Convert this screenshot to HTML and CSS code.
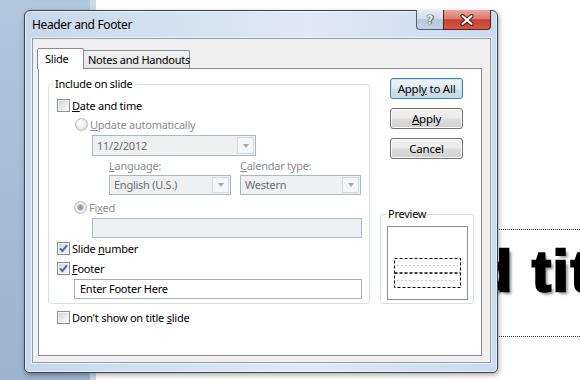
FILE: index.html
```html
<!DOCTYPE html>
<html lang="en">
<head>
<meta charset="utf-8">
<title>Header and Footer</title>
<link rel="stylesheet" href="styles.css">
</head>
<body>
<div class="screen">
  <div class="slides-pane"></div>
  <div class="slide-area">
    <div class="title-ph"><span class="title-text">Click to add title</span></div>
  </div>

  <div class="dialog">
    <div class="titlebar">
      <span class="title">Header and Footer</span>
      <div class="caption-btns">
        <span class="cap-btn help">?</span>
        <span class="cap-btn close">
          <svg width="14" height="12" viewBox="0 0 14 12">
            <path d="M2.5 2 L11.5 10 M11.5 2 L2.5 10" stroke="#4a1a16" stroke-width="4.2" stroke-linecap="round" fill="none"/>
            <path d="M2.5 2 L11.5 10 M11.5 2 L2.5 10" stroke="#ffffff" stroke-width="2.2" stroke-linecap="round" fill="none"/>
          </svg>
        </span>
      </div>
    </div>

    <div class="client">
      <div class="tabs">
        <span class="tab active">Slide</span>
        <span class="tab notes">Notes and Handouts</span>
      </div>
      <div class="panel">
        <div class="main">
          <fieldset class="group include">
            <legend>Include on slide</legend>
            <div class="row r-date"><span class="chk"></span><span class="lbl"><u>D</u>ate and time</span></div>
            <div class="row r-update disabled"><span class="radio"></span><span class="lbl"><u>U</u>pdate automatically</span></div>
            <div class="combo date-combo"><span class="combo-text">11/2/2012</span><span class="combo-btn"><span class="arrow"></span></span></div>
            <div class="lang-row">
              <div class="field lang">
                <span class="flabel"><u>L</u>anguage:</span>
                <div class="combo"><span class="combo-text">English (U.S.)</span><span class="combo-btn"><span class="arrow"></span></span></div>
              </div>
              <div class="field cal">
                <span class="flabel"><u>C</u>alendar type:</span>
                <div class="combo"><span class="combo-text">Western</span><span class="combo-btn"><span class="arrow"></span></span></div>
              </div>
            </div>
            <div class="row r-fixed disabled"><span class="radio on"></span><span class="lbl">Fi<u>x</u>ed</span></div>
            <div class="textbox fixed-box"></div>
            <div class="row r-slide"><span class="chk"><svg width="11" height="11" viewBox="0 0 11 11"><path d="M2 5.3 L4.4 8 L9 2.4" stroke="#4d67a6" stroke-width="2" fill="none"/></svg></span><span class="lbl">Slide <u>n</u>umber</span></div>
            <div class="row r-footer"><span class="chk"><svg width="11" height="11" viewBox="0 0 11 11"><path d="M2 5.3 L4.4 8 L9 2.4" stroke="#4d67a6" stroke-width="2" fill="none"/></svg></span><span class="lbl"><u>F</u>ooter</span></div>
            <div class="textbox footer-box">Enter Footer Here</div>
          </fieldset>

          <div class="side">
            <button class="btn default">Appl<u>y</u> to All</button>
            <button class="btn"><u>A</u>pply</button>
            <button class="btn">Cancel</button>
            <fieldset class="group preview">
              <legend>Preview</legend>
              <div class="preview-box">
                <svg width="79" height="72" viewBox="0 0 79 72">
                  <line x1="9" y1="38.5" x2="70" y2="38.5" stroke="#c8c8c8" stroke-width="1" stroke-dasharray="2 2"/>
                  <line x1="9" y1="53.5" x2="70" y2="53.5" stroke="#c8c8c8" stroke-width="1" stroke-dasharray="2 2"/>
                  <rect x="6.5" y="31.5" width="66" height="29" fill="none" stroke="#000" stroke-width="1" stroke-dasharray="3 2"/>
                  <line x1="6.5" y1="46" x2="72.5" y2="46" stroke="#000" stroke-width="1.6" stroke-dasharray="3 2"/>
                </svg>
              </div>
            </fieldset>
          </div>
        </div>
        <div class="row dont-show"><span class="chk"></span><span class="lbl">Don't show on title <u>s</u>lide</span></div>
      </div>
    </div>
  </div>
</div>
</body>
</html>
```

FILE: styles.css
```css
* { box-sizing: border-box; }

body {
  margin: 0;
  font-family: "Noto Sans", "Open Sans", sans-serif;
  font-size: 11px;
  letter-spacing: -0.25px;
  color: #000;
}

u { text-decoration: underline; text-underline-offset: 1px; }

.screen {
  position: relative;
  width: 580px;
  height: 380px;
  overflow: hidden;
  display: flex;
  background: #fff;
}

/* PowerPoint background */
.slides-pane {
  width: 96px;
  flex: none;
  background: linear-gradient(#b2c6dc, #9db3cd);
  border-right: 6px solid #cad8e8;
}

.slide-area {
  flex: 1;
  position: relative;
  background: #fff;
}

.title-ph {
  position: absolute;
  top: 229px;
  left: 60px;
  width: 600px;
  height: 108px;
  border-top: 1px dotted #333;
  border-bottom: 1px dotted #333;
  padding: 9px 0 0 11px;
}

.title-text {
  font-family: "Liberation Sans", Arial, sans-serif;
  font-weight: bold;
  font-size: 57px;
  line-height: 64px;
  letter-spacing: 2px;
  white-space: nowrap;
  color: #000;
  -webkit-text-stroke: 2.5px #000;
  text-shadow: 3px 3px 3px rgba(0, 0, 0, 0.45);
}

/* Dialog window */
.dialog {
  position: absolute;
  left: 24px;
  top: 10px;
  width: 474px;
  height: 363px;
  display: flex;
  flex-direction: column;
  padding: 0 6px 9px 7px;
  border: 1px solid #34455a;
  border-radius: 6px 6px 5px 5px;
  background: linear-gradient(90deg, #c8d8eb 0%, #d9e5f2 45%, #e0e9f5 60%, #cadaec 100%);
  box-shadow: 1px 2px 5px rgba(0, 0, 0, 0.35), inset 0 0 0 1px rgba(255, 255, 255, 0.55);
}

.titlebar {
  height: 27px;
  flex: none;
  display: flex;
  align-items: center;
}

.title {
  font-size: 12px;
  letter-spacing: -0.35px;
}

.caption-btns {
  margin-left: auto;
  align-self: flex-start;
  margin-top: -1px;
  display: flex;
  height: 20px;
}

.cap-btn {
  display: flex;
  align-items: center;
  justify-content: center;
  height: 20px;
  border: 1px solid #4d5d72;
  border-top: none;
}

.help {
  width: 27px;
  border-radius: 0 0 0 4px;
  border-right: none;
  background: linear-gradient(#e6edf5 0%, #d2dde9 45%, #b7c8db 50%, #c3d2e3 100%);
  color: #f4f6f8;
  font-family: "DejaVu Sans", sans-serif;
  font-weight: bold;
  font-size: 12px;
  letter-spacing: 0;
  text-shadow: 0 0 1px #2f3d4f, 0 0 1px #2f3d4f, 1px 0 1px #2f3d4f;
}

.close {
  width: 48px;
  border-radius: 0 0 4px 0;
  border-color: #5a1f1a;
  background: linear-gradient(#eaa89e 0%, #dc7b6f 45%, #c7402f 52%, #d3584a 100%);
}

.close svg { display: block; }

/* Client area */
.client {
  flex: 1;
  display: flex;
  flex-direction: column;
  background: #f0f0f0;
  border: 1px solid #8b9bb0;
  padding: 9px 8px 6px 5px;
  box-shadow: 0 0 0 1px rgba(255, 255, 255, 0.6);
}

.tabs {
  display: flex;
  align-items: flex-end;
  flex: none;
}

.tab {
  display: flex;
  align-items: center;
  height: 18px;
  border: 1px solid #898c95;
  border-bottom: none;
  background: linear-gradient(#f2f2f2, #e3e3e3);
  padding: 0 4px;
  white-space: nowrap;
}

.tab.active {
  position: relative;
  z-index: 1;
  height: 21px;
  width: 47px;
  margin-left: -1px;
  margin-bottom: -1px;
  background: #fff;
  padding: 0 0 1px 7px;
  border-radius: 2px 2px 0 0;
}

.tab.notes {
  width: 107px;
  margin-left: -1px;
  padding: 0 0 0 4px;
  border-radius: 2px 2px 0 0;
}

.panel {
  flex: 1;
  background: #fff;
  border: 1px solid #898c95;
  padding: 7px 0 0 9px;
  display: flex;
  flex-direction: column;
}

.main {
  display: flex;
  align-items: stretch;
}

.group {
  margin: 0;
  border: 1px solid #d5dfe5;
  border-radius: 3px;
  min-width: 0;
}

.group legend {
  padding: 0 2px;
  line-height: 16px;
  height: 16px;
}

.include {
  width: 322px;
  padding: 4px 8px 4px 8px;
}

.include legend { margin-left: -4px; }

.row {
  display: flex;
  align-items: center;
  height: 18px;
  gap: 2px;
  white-space: nowrap;
}

.disabled .lbl { color: #8d8d8d; }

.r-update { margin-top: 1px; padding-left: 18px; }
.r-fixed { margin-top: 3px; padding-left: 17px; }
.r-slide { margin-top: 1px; }
.r-footer { margin-top: 2px; }

/* Checkbox */
.chk {
  width: 13px;
  height: 13px;
  flex: none;
  border: 1px solid #8e8f8f;
  background: linear-gradient(135deg, #cfd2d6 0%, #e9eaeb 55%, #f7f7f7 100%);
  box-shadow: inset 0 0 0 1px #f4f4f4;
}

.chk svg { display: block; }

/* Radio */
.radio {
  width: 13px;
  height: 13px;
  flex: none;
  border-radius: 50%;
  border: 1px solid #b9b9b9;
  background: radial-gradient(circle at 40% 35%, #ffffff 0%, #ececec 50%, #d6d6d6 100%);
}

.radio.on {
  background: radial-gradient(circle at 50% 50%, #8f8f8f 0, #a9a9a9 2.4px, #d8d8d8 3.2px, #f6f6f6 4.2px, #e2e2e2 6px);
}

/* Combo boxes */
.combo {
  display: flex;
  height: 20px;
  border: 1px solid #a9b7c6;
  background: #eef0f2;
  color: #6d6d6d;
}

.combo-text {
  flex: 1;
  padding-left: 4px;
  line-height: 18px;
  white-space: nowrap;
}

.combo-btn {
  width: 17px;
  flex: none;
  margin: 1px;
  border: 1px solid #d3dae1;
  background: #f5f6f7;
  display: flex;
  align-items: center;
  justify-content: center;
}

.arrow {
  width: 0;
  height: 0;
  border-left: 3.5px solid transparent;
  border-right: 3.5px solid transparent;
  border-top: 4px solid #a8a8a8;
}

.date-combo {
  margin-top: 2px;
  margin-left: 35px;
  width: 164px;
  height: 21px;
}

.date-combo .combo-text { line-height: 19px; }

.lang-row {
  margin-top: 2px;
  margin-left: 52px;
  display: flex;
  gap: 9px;
}

.field {
  display: flex;
  flex-direction: column;
}

.flabel {
  height: 16px;
  line-height: 16px;
  color: #8d8d8d;
  white-space: nowrap;
  margin-bottom: 1px;
}

.lang .combo { width: 122px; }
.cal .combo { width: 121px; }

/* Text boxes */
.textbox {
  height: 20px;
  border: 1px solid #abadb3;
  background: #fff;
  line-height: 18px;
  padding-left: 5px;
  white-space: nowrap;
}

.fixed-box {
  margin-top: 2px;
  margin-left: 35px;
  width: 270px;
  border-color: #afbccb;
  background: #eef1f4;
}

.footer-box {
  margin-top: 2px;
  margin-left: 17px;
  width: 288px;
}

/* Right column */
.side {
  width: 94px;
  margin-left: 10px;
  display: flex;
  flex-direction: column;
}

.btn {
  width: 73px;
  height: 21px;
  margin: 9px 0 0 10px;
  padding: 0;
  font-family: inherit;
  font-size: 11.5px;
  letter-spacing: -0.25px;
  color: #000;
  border: 1px solid #707070;
  border-radius: 3px;
  background: linear-gradient(#f2f2f2 0%, #ebebeb 48%, #dddddd 52%, #cfcfcf 100%);
  box-shadow: inset 0 0 0 1px #fbfbfb;
}

.btn.default {
  margin-top: 2px;
  border-color: #3c7fb1;
  background: linear-gradient(#edf3f7 0%, #e3ecf2 48%, #d2dfe8 52%, #c6d6e2 100%);
  box-shadow: inset 0 0 0 1px #c2e6f8;
}

.preview {
  margin-top: auto;
  padding: 4px 6px 3px 6px;
}

.preview legend { margin-left: -1px; }

.preview-box {
  width: 81px;
  height: 74px;
  border: 1px solid #8e8f8f;
  background: #fff;
}

.preview-box svg { display: block; }

.dont-show {
  margin-top: 4px;
  padding-left: 9px;
}
```
